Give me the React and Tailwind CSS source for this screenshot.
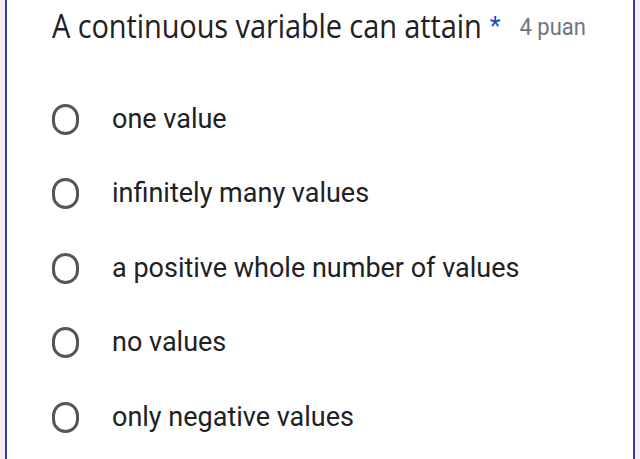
import { useState } from "react";

const OPTIONS = [
  "one value",
  "infinitely many values",
  "a positive whole number of values",
  "no values",
  "only negative values",
];

function Radio() {
  return (
    <span className="block w-[27px] h-[31px] rounded-full border-[3.5px] border-[#555555] shrink-0" />
  );
}

export default function App() {
  const [picked, setPicked] = useState(null);

  return (
    <div className="w-[640px] h-[459px] bg-[#f6eaf6] px-[5px] overflow-hidden">
      <div className="h-full bg-white border-x-2 border-[#3b3b9e] pl-[45px] pr-4 font-['Roboto',sans-serif]">
        {/* Header */}
        <div className="flex items-center h-[52px]">
          <h1 className="text-[29px] text-[#202124] tracking-[-0.1px] scale-y-110 font-['Open_Sans',sans-serif] whitespace-nowrap">
            A continuous variable can attain
          </h1>
          <span className="ml-[8px] text-[25px] text-[#1a47c8] self-start mt-[8px]">*</span>
          <span className="ml-[19px] text-[22px] text-[#70757a] scale-y-110">4 puan</span>
        </div>

        {/* Options */}
        <div className="mt-[51px] flex flex-col gap-[42.5px]">
          {OPTIONS.map((opt, i) => (
            <label
              key={opt}
              className="flex items-center gap-[33px] h-8 cursor-pointer"
              onClick={() => setPicked(i)}
            >
              <Radio />
              <span className="text-[27px] text-[#202124] scale-y-105 whitespace-nowrap">
                {opt}
              </span>
            </label>
          ))}
        </div>
      </div>
    </div>
  );
}
